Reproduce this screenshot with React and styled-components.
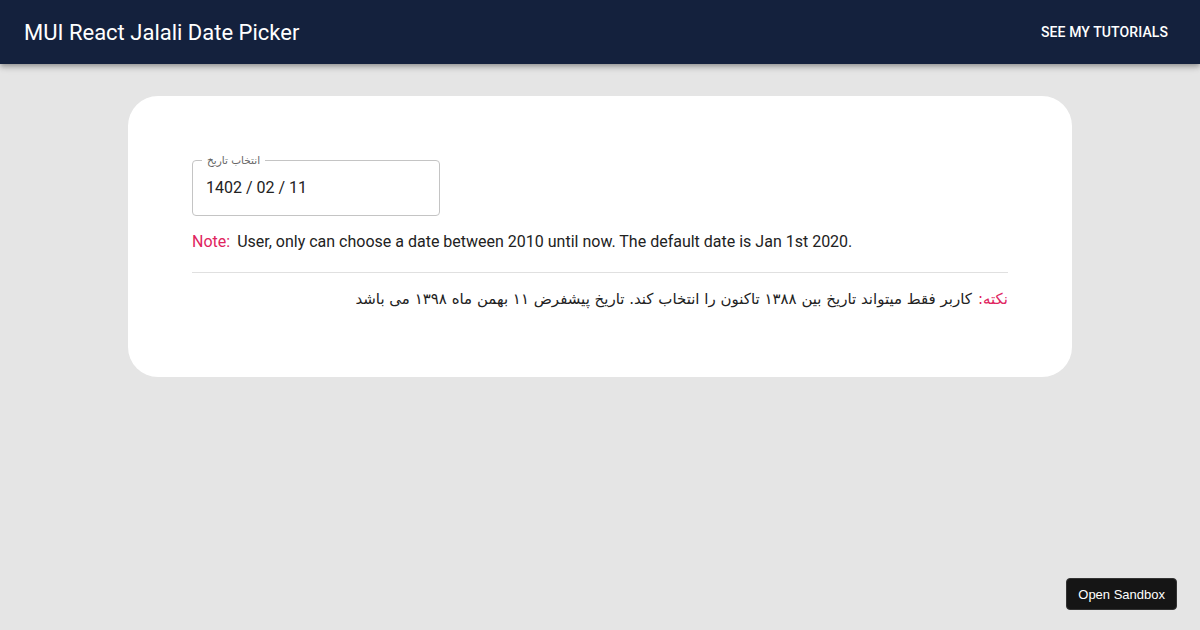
import React from 'react'
import styled, { createGlobalStyle } from 'styled-components'

const GlobalStyle = createGlobalStyle`
  html, body {
    margin: 0;
    padding: 0;
    background: #e5e5e5;
    font-family: Roboto, "DejaVu Sans", sans-serif;
  }
`

const Page = styled.div`
  min-height: 630px;
  background: #e5e5e5;
  position: relative;
`

const AppBar = styled.header`
  height: 64px;
  background: #14213d;
  color: #fff;
  display: flex;
  align-items: center;
  justify-content: space-between;
  padding: 0 24px;
  box-shadow: 0 2px 4px -1px rgba(0,0,0,0.2), 0 4px 5px 0 rgba(0,0,0,0.14), 0 1px 10px 0 rgba(0,0,0,0.12);
`

const Title = styled.h1`
  margin: 0;
  font-size: 22px;
  font-weight: 400;
`

const NavButton = styled.button`
  background: none;
  border: none;
  color: #fff;
  font-family: Roboto, sans-serif;
  font-size: 14px;
  font-weight: 500;
  letter-spacing: 0.1px;
  text-transform: uppercase;
  padding: 6px 8px;
  cursor: pointer;
`

const Main = styled.main`
  display: flex;
  justify-content: center;
  padding-top: 32px;
`

const Card = styled.section`
  width: 944px;
  box-sizing: border-box;
  background: #fff;
  border-radius: 30px;
  padding: 64px;
`

const Field = styled.fieldset`
  width: 248px;
  height: 56px;
  box-sizing: border-box;
  margin: 0;
  border: 1px solid #c4c4c4;
  border-radius: 4px;
  padding: 0 13px;
  position: relative;
  display: flex;
  align-items: center;
`

const Legend = styled.span`
  position: absolute;
  top: -9px;
  left: 9px;
  padding: 0 5px;
  background: #fff;
  font-family: "DejaVu Sans", sans-serif;
  font-size: 10.5px;
  color: #666;
  direction: rtl;
  line-height: 16px;
`

const Value = styled.span`
  font-size: 16px;
  color: #222;
  margin-top: -2px;
`

const Note = styled.p`
  margin: ${p => (p.rtl ? '0' : '14px 0 0')};
  color: #222;
  direction: ${p => (p.rtl ? 'rtl' : 'ltr')};
  font-family: ${p => (p.rtl ? '"DejaVu Sans", sans-serif' : 'Roboto, sans-serif')};
  font-size: ${p => (p.rtl ? '15px' : '16px')};
  line-height: ${p => (p.rtl ? '28px' : '24px')};
`

const Tag = styled.span`
  color: #e0245e;
  margin-right: ${p => (p.rtl ? '0' : '7px')};
  margin-left: ${p => (p.rtl ? '6px' : '0')};
`

const Divider = styled.hr`
  border: none;
  border-top: 1px solid #e0e0e0;
  margin: 18px 0 12px;
`

const SandboxButton = styled.button`
  position: absolute;
  right: 23px;
  bottom: 20px;
  background: #151515;
  color: #fff;
  border: 1px solid #333;
  border-radius: 4px;
  font-family: "Liberation Sans", Arial, sans-serif;
  font-size: 13px;
  padding: 0 11px;
  height: 32px;
  cursor: pointer;
`

export default function App() {
  return (
    <Page>
      <GlobalStyle />
      <AppBar>
        <Title>MUI React Jalali Date Picker</Title>
        <NavButton>See my tutorials</NavButton>
      </AppBar>
      <Main>
        <Card>
          <Field>
            <Legend>انتخاب تاریخ</Legend>
            <Value>1402 / 02 / 11</Value>
          </Field>
          <Note>
            <Tag>Note:</Tag>User, only can choose a date between 2010 until now. The default date is Jan 1st 2020.
          </Note>
          <Divider />
          <Note rtl>
            <Tag rtl>نکته:</Tag>کاربر فقط میتواند تاریخ بین ۱۳۸۸ تاکنون را انتخاب کند. تاریخ پیشفرض ۱۱ بهمن ماه ۱۳۹۸ می باشد
          </Note>
        </Card>
      </Main>
      <SandboxButton>Open Sandbox</SandboxButton>
    </Page>
  )
}
